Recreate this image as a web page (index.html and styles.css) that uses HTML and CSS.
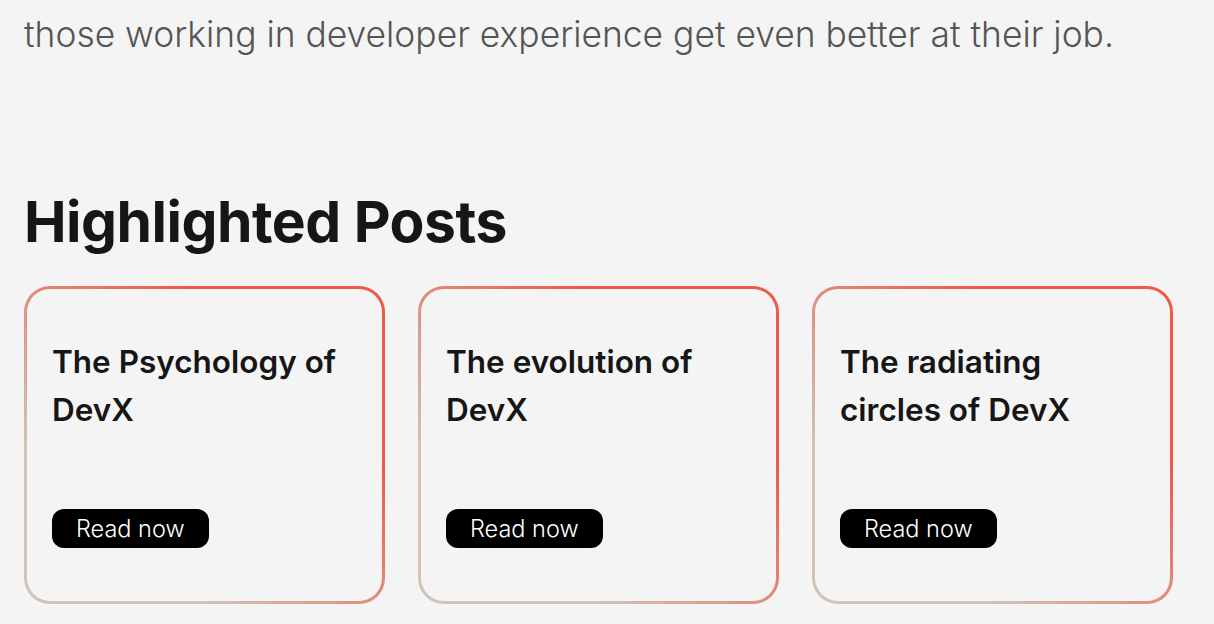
FILE: index.html
```html
<!DOCTYPE html>
<html lang="en">
<head>
    <meta charset="UTF-8">
    <meta name="viewport" content="width=device-width, initial-scale=1.0">
    <title>DevX Blog</title>
    <link rel="stylesheet" href="styles.css">
</head>
<body>
    <div class="page">
        <p class="intro">those working in developer experience get even better at their job.</p>

        <h2 class="section-title">Highlighted Posts</h2>
        <div class="posts">
            <div class="post-card">
                <h3>The Psychology of DevX</h3>
                <a class="btn" href="#">Read now</a>
            </div>
            <div class="post-card">
                <h3>The evolution of DevX</h3>
                <a class="btn" href="#">Read now</a>
            </div>
            <div class="post-card">
                <h3>The radiating circles of DevX</h3>
                <a class="btn" href="#">Read now</a>
            </div>
        </div>
    </div>
</body>
</html>
```

FILE: styles.css
```css
body {
    margin: 0;
    font-family: Inter, "Noto Sans", sans-serif;
    background-color: #f4f4f4;
    color: #161616;
}
.page {
    padding: 0 24px;
}
.intro {
    margin: 9px 0 0;
    font-size: 35.4px;
    line-height: 51px;
    font-weight: 300;
    color: #555;
}
.section-title {
    margin: 126px 0 0;
    font-size: 57px;
    line-height: 72px;
    font-weight: 700;
    letter-spacing: -0.5px;
}
.posts {
    display: flex;
    gap: 33px;
    margin-top: 28px;
}
.post-card {
    width: 361px;
    height: 318px;
    box-sizing: border-box;
    display: flex;
    flex-direction: column;
    align-items: flex-start;
    padding: 49px 25px 53px;
    border: 3px solid transparent;
    border-radius: 26px;
    background:
        linear-gradient(#f4f4f4, #f4f4f4) padding-box,
        linear-gradient(to top right, #cfc4b6 25%, #ec5b4a 72%) border-box;
}
.post-card h3 {
    max-width: 290px;
    margin: 0;
    font-size: 31.5px;
    line-height: 48px;
    font-weight: 600;
}
.btn {
    margin-top: auto;
    display: inline-block;
    padding: 0 24px;
    height: 39px;
    line-height: 39px;
    border-radius: 12px;
    background-color: #000;
    color: #fff;
    font-size: 23.5px;
    font-weight: 300;
    text-decoration: none;
}
```
